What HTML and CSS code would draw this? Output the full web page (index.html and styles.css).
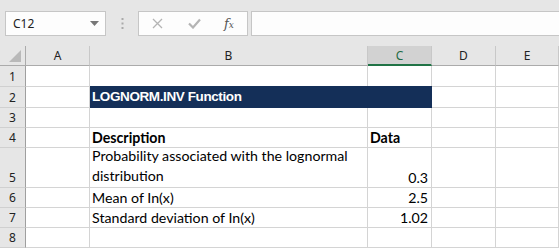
FILE: index.html
```html
<!DOCTYPE html>
<html>
<head>
<meta charset="utf-8">
<title>LOGNORM.INV</title>
<link rel="stylesheet" href="styles.css">
</head>
<body>
<div class="toolbar">
  <div class="namebox">
    <span>C12</span>
    <svg class="drop" width="9" height="5" viewBox="0 0 9 5"><path d="M0 0h9L4.5 5z" fill="#777"/></svg>
  </div>
  <svg class="dots" width="3" height="11" viewBox="0 0 3 11"><rect x="0.5" y="0" width="2" height="2" fill="#aaa"/><rect x="0.5" y="4.5" width="2" height="2" fill="#aaa"/><rect x="0.5" y="9" width="2" height="2" fill="#aaa"/></svg>
  <div class="fxbox">
    <svg class="cancel" width="11" height="11" viewBox="0 0 11 11"><path d="M1 1l9 9M10 1l-9 9" stroke="#b4b4b4" stroke-width="1.3" fill="none"/></svg>
    <svg class="enter" width="13" height="11" viewBox="0 0 13 11"><path d="M1 5.5l4 4L12 1.5" stroke="#b4b4b4" stroke-width="2.2" fill="none"/></svg>
    <span class="fx">f<small>x</small></span>
  </div>
  <div class="formula"></div>
</div>

<div class="sheet">
  <div class="corner"><svg width="12" height="12" viewBox="0 0 12 12"><path d="M12 0v12H0z" fill="#b9b9b9"/></svg></div>
  <div class="colhead">A</div>
  <div class="colhead">B</div>
  <div class="colhead sel">C</div>
  <div class="colhead">D</div>
  <div class="colhead">E</div>

  <div class="rowhead">1</div><div class="cell"></div><div class="cell"></div><div class="cell"></div><div class="cell"></div><div class="cell"></div>

  <div class="rowhead">2</div><div class="cell"></div><div class="cell title">LOGNORM.INV Function</div><div class="cell"></div><div class="cell"></div>

  <div class="rowhead">3</div><div class="cell"></div><div class="cell"></div><div class="cell"></div><div class="cell"></div><div class="cell"></div>

  <div class="rowhead">4</div><div class="cell"></div><div class="cell bold">Description</div><div class="cell bold">Data</div><div class="cell"></div><div class="cell"></div>

  <div class="rowhead">5</div><div class="cell"></div><div class="cell wrap">Probability associated with the lognormal distribution</div><div class="cell num">0.3</div><div class="cell"></div><div class="cell"></div>

  <div class="rowhead">6</div><div class="cell"></div><div class="cell">Mean of In(x)</div><div class="cell num">2.5</div><div class="cell"></div><div class="cell"></div>

  <div class="rowhead">7</div><div class="cell"></div><div class="cell">Standard deviation of In(x)</div><div class="cell num">1.02</div><div class="cell"></div><div class="cell"></div>

  <div class="rowhead">8</div><div class="cell"></div><div class="cell"></div><div class="cell"></div><div class="cell"></div><div class="cell"></div>
</div>
</body>
</html>
```

FILE: styles.css
```css
body {
	margin: 0;
	height: 248px;
	background: #e6e6e6;
	font-family: 'Lato', sans-serif;
	overflow: hidden;
}
.toolbar {
	display: flex;
	align-items: center;
	height: 46px;
	padding-left: 5px;
	box-sizing: border-box;
}
.namebox {
	display: flex;
	align-items: center;
	justify-content: space-between;
	width: 101px;
	height: 25px;
	box-sizing: border-box;
	background: #fdfdfd;
	border: 1px solid #c6c6c6;
	padding: 0 6px 0 7px;
	font-family: 'Noto Sans', sans-serif;
	font-size: 12px;
	color: #222;
}
.dots {
	margin: 0 14px 0 15px;
}
.fxbox {
	display: flex;
	align-items: center;
	width: 110px;
	height: 25px;
	box-sizing: border-box;
	background: #fdfdfd;
	border: 1px solid #c6c6c6;
}
.cancel {
	margin-left: 13px;
}
.enter {
	margin-left: 25px;
}
.fx {
	font-family: 'DejaVu Serif', serif;
	font-style: italic;
	font-size: 13px;
	color: #555;
	margin-left: 23px;
}
.fx small {
	font-size: 9px;
}
.formula {
	flex: 1;
	height: 25px;
	box-sizing: border-box;
	background: #fdfdfd;
	border: 1px solid #c6c6c6;
	border-right: none;
	margin-left: 3px;
}
.sheet {
	display: grid;
	grid-template-columns: 26px 64px 278px 64px 64px 1fr;
	grid-template-rows: 20px 21px 21px 20px 20px 40px 20px 20px 20px;
}
.sheet > div {
	box-sizing: border-box;
}
.corner {
	display: flex;
	align-items: flex-end;
	justify-content: flex-end;
	padding: 0 4px 3px 0;
	border-right: 1px solid #ababab;
	border-bottom: 1px solid #ababab;
}
.colhead {
	display: flex;
	align-items: center;
	justify-content: center;
	font-family: 'Noto Sans', sans-serif;
	font-size: 12px;
	color: #222;
	border-right: 1px solid #c8c8c8;
	border-bottom: 1px solid #ababab;
}
.colhead.sel {
	background: #d2d2d2;
	color: #1f6b45;
	border-bottom: 2px solid #217346;
}
.rowhead {
	display: flex;
	align-items: flex-end;
	justify-content: center;
	padding-bottom: 1px;
	font-family: 'Noto Sans', sans-serif;
	font-size: 12px;
	color: #222;
	border-right: 1px solid #9f9f9f;
	border-bottom: 1px solid #d0d0d0;
}
.cell {
	background: #fff;
	border-right: 1px solid #d4d4d4;
	border-bottom: 1px solid #d4d4d4;
	padding: 0 3px 1px 2px;
	font-size: 14.2px;
	color: #000;
	display: flex;
	align-items: flex-end;
	white-space: nowrap;
}
.title {
	grid-column: span 2;
	background: #142f58;
	border-color: #142f58;
	margin-top: -1px;
	color: #fff;
	font-family: 'Liberation Sans', Arial, sans-serif;
	font-weight: bold;
	font-size: 13.5px;
	letter-spacing: -0.4px;
	align-items: center;
}
.bold {
	font-weight: bold;
}
.wrap {
	white-space: normal;
	line-height: 20px;
}
.num {
	justify-content: flex-end;
}
```
